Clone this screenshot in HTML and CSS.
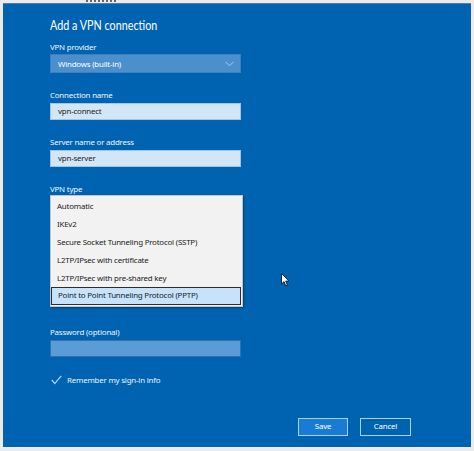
FILE: index.html
```html
<!DOCTYPE html>
<html>
<head>
<meta charset="utf-8">
<link rel="stylesheet" href="styles.css">
</head>
<body>
<div class="topstrip"><span class="peek"></span></div>
<div class="dialog">
  <h1 class="title">Add a VPN connection</h1>

  <div class="label first">VPN provider</div>
  <div class="select"><span>Windows (built-in)</span>
    <svg class="chev" width="9" height="6" viewBox="0 0 9 6"><polyline points="0.5,0.8 4.5,4.8 8.5,0.8" fill="none" stroke="#a9cbe9" stroke-width="1"/></svg>
  </div>

  <div class="label">Connection name</div>
  <div class="input">vpn-connect</div>

  <div class="label">Server name or address</div>
  <div class="input">vpn-server</div>

  <div class="label">VPN type</div>
  <div class="list">
    <div class="item">Automatic</div>
    <div class="item">IKEv2</div>
    <div class="item">Secure Socket Tunneling Protocol (SSTP)</div>
    <div class="item">L2TP/IPsec with certificate</div>
    <div class="item">L2TP/IPsec with pre-shared key</div>
    <div class="item selected">Point to Point Tunneling Protocol (PPTP)</div>
  </div>

  <div class="label pw">Password (optional)</div>
  <div class="input password"></div>

  <div class="check">
    <svg width="11" height="10" viewBox="0 0 11 10"><polyline points="0.8,5 3.8,8.6 10.2,0.8" fill="none" stroke="#a8d4ff" stroke-width="1.3"/></svg>
    <span>Remember my sign-in info</span>
  </div>

  <div class="buttons">
    <div class="btn save">Save</div>
    <div class="btn cancel">Cancel</div>
  </div>

  <svg class="cursor" width="9" height="14" viewBox="0 0 9 14"><path d="M0.5,0.5 L0.5,11 L3,8.6 L4.8,12.8 L6.4,12.1 L4.7,8.1 L8,8.1 Z" fill="#ffffff" stroke="#000000" stroke-width="0.8" stroke-linejoin="round"/></svg>
</div>
</body>
</html>
```
FILE: styles.css
```css
html, body {
  margin: 0;
  padding: 0;
  background: #ebebeb;
  width: 474px;
  height: 451px;
  overflow: hidden;
  font-family: "Noto Sans", "Open Sans", sans-serif;
}
.topstrip {
  height: 3px;
  position: relative;
}
.peek {
  position: absolute;
  left: 86px;
  top: 0;
  width: 30px;
  height: 0;
  border-top: 2px dotted #666;
}
.dialog {
  position: relative;
  margin: 0 3px;
  height: 444px;
  box-sizing: border-box;
  background: #0063b1;
  border-top: 1px solid #5a7c98;
  padding: 11px 0 11px 47px;
  display: flex;
  flex-direction: column;
  color: #fff;
}
.title {
  margin: 0;
  font-family: "Lato", "Noto Sans", sans-serif;
  font-weight: 400;
  font-size: 14px;
  line-height: 20px;
  height: 20px;
  color: #fff;
  white-space: nowrap;
  transform: scaleX(0.77);
  transform-origin: left center;
}
.label {
  font-size: 7.9px;
  letter-spacing: -0.2px;
  line-height: 12px;
  height: 12px;
  margin-top: 16px;
  color: #f2f7fc;
}
.label.first { margin-top: 6px; }
.label.pw { margin-top: 19px; }
.select {
  margin-top: 1px;
  width: 191px;
  height: 19px;
  box-sizing: border-box;
  background: #4b8fcd;
  border: 1px solid #3d7fbe;
  display: flex;
  align-items: center;
  justify-content: space-between;
  padding: 0 6px 0 7px;
  font-size: 7.9px;
  letter-spacing: -0.2px;
  color: #fff;
}
.input {
  margin-top: 2px;
  width: 191px;
  height: 17px;
  box-sizing: border-box;
  background: #d3e6f6;
  border: 1px solid #9ec4e6;
  padding: 0 7px;
  font-size: 7.9px;
  letter-spacing: -0.2px;
  line-height: 15px;
  color: #1b1b1b;
}
.input.password {
  background: #5c9cd6;
  border: 1px solid #2f72b2;
}
.list {
  width: 193px;
  box-sizing: border-box;
  background: #f2f2f2;
  border: 1px solid #c4c4c4;
  box-shadow: 1px 1px 2px rgba(0,0,0,0.35);
  padding: 1px 0;
}
.item {
  height: 18px;
  line-height: 18px;
  font-size: 7.9px;
  letter-spacing: -0.2px;
  color: #1a1a1a;
  padding-left: 6px;
  box-sizing: border-box;
}
.item.selected {
  margin-right: 1px;
  background: #c6e3fb;
  border: 1.5px solid #2d2d2d;
  line-height: 15px;
}
.check {
  margin-top: 17px;
  height: 12px;
  display: flex;
  align-items: center;
  gap: 5px;
  padding-left: 1px;
  font-size: 7.9px;
  letter-spacing: -0.2px;
  color: #eaf3fc;
}
.buttons {
  margin-top: auto;
  display: flex;
  gap: 12px;
  padding-left: 248px;
}
.btn {
  width: 50px;
  height: 18px;
  box-sizing: border-box;
  border: 1.5px solid #a6d4ff;
  font-size: 7.9px;
  letter-spacing: -0.2px;
  line-height: 15px;
  text-align: center;
  color: #fff;
}
.btn.save { background: #1a7bd6; }
.btn.cancel { background: #0063b1; width: 51px; }
.cursor {
  position: absolute;
  left: 278px;
  top: 269px;
}
```
